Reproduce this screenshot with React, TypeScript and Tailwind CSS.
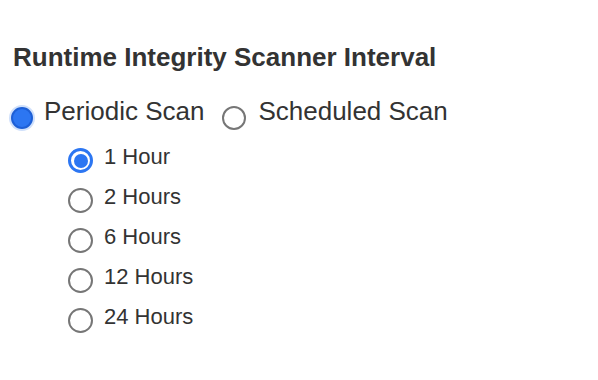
import React from "react";

function Radio({ checked, focused, size = 22 }: { checked?: boolean; focused?: boolean; size?: number }) {
  if (focused) {
    return (
      <span className="flex shrink-0 items-center justify-center rounded-full bg-[#cfe0fb]" style={{ width: size + 2, height: size + 2 }}>
        <span className="block rounded-full border-2 border-[#1d5fd6] bg-[#2c76f2]" style={{ width: size - 2, height: size - 2 }} />
      </span>
    );
  }
  if (checked) {
    return (
      <span className="flex shrink-0 items-center justify-center rounded-full border-[3px] border-[#2c76f2] bg-white" style={{ width: size, height: size }}>
        <span className="block h-[14px] w-[14px] rounded-full bg-[#2c76f2]" />
      </span>
    );
  }
  return <span className="block shrink-0 rounded-full border-2 border-[#767676] bg-white" style={{ width: size, height: size }} />;
}

const options = ["1 Hour", "2 Hours", "6 Hours", "12 Hours", "24 Hours"];

export default function App() {
  return (
    <div className="h-[380px] w-[598px] bg-white text-[#333333]" style={{ fontFamily: '"Liberation Sans", Arial, sans-serif' }}>
      <div className="pt-[42px] pl-[13px] text-[26px] font-bold leading-[30px]">Runtime Integrity Scanner Interval</div>
      <div className="mt-[24px] flex h-[30px] items-start pl-[9px] text-[26px] leading-[30px]">
        <span className="mt-[9px] flex leading-none"><Radio focused size={24} /></span>
        <span className="ml-[9px]">Periodic Scan</span>
        <span className="ml-[18px] mt-[10px] flex leading-none"><Radio size={24} /></span>
        <span className="ml-[12px]">Scheduled Scan</span>
      </div>
      <div className="mt-[11px] flex flex-col pl-[68px] text-[22px] leading-[40px]">
        {options.map((o, i) => (
          <div key={o} className="flex h-[40px] items-start">
            <span className="mt-[11px] flex leading-none"><Radio checked={i === 0} size={25} /></span>
            <span className="ml-[11px]">{o}</span>
          </div>
        ))}
      </div>
    </div>
  );
}
